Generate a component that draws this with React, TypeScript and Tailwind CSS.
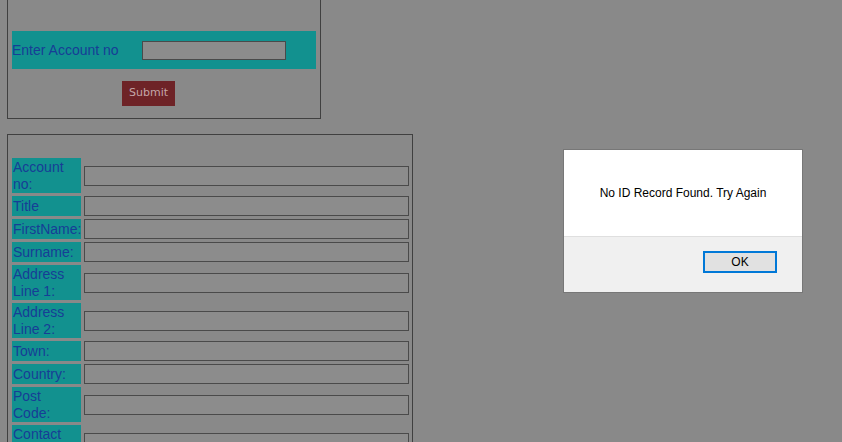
import React from 'react';

const fields = [
  'Account no:',
  'Title',
  'FirstName:',
  'Surname:',
  'Address Line 1:',
  'Address Line 2:',
  'Town:',
  'Country:',
  'Post Code:',
  'Contact Number:',
];

const App: React.FC = () => {
  return (
    <div className="relative w-[842px] h-[442px] overflow-hidden bg-[#898989] pl-[7px] font-['Liberation_Sans',Arial,sans-serif]">
      {/* Search box */}
      <div className="-mt-[10px] w-[314px] h-[129px] border border-[#404040] px-[4px] pt-[40px]">
        <div className="flex items-center w-[304px] h-[38px] bg-[#12918f]">
          <span className="w-[130px] text-[14px] text-[#173d96]">Enter Account no</span>
          <div className="w-[144px] h-[19px] border border-[#4a4a4a] bg-[#8c8c8c]" />
        </div>
        <button className="mt-[12px] ml-[110px] w-[53px] h-[25px] bg-[#6e2327] text-[11px] text-[#c4a6a7] font-['DejaVu_Sans',Verdana,sans-serif]">
          Submit
        </button>
      </div>

      {/* Details form */}
      <div className="mt-[15px] w-[406px] h-[320px] border border-[#404040] pl-[4px] pr-[3px] pt-[23px]">
        <div className="flex flex-col gap-[3px]">
          {fields.map((f) => (
            <div key={f} className="flex items-stretch gap-[3px]">
              <div className="flex items-center w-[69px] shrink-0 bg-[#12918f] pl-[1px] py-[1px] text-[14px] leading-[16.5px] text-[#173d96]">
                {f}
              </div>
              <div className="flex flex-1 items-center">
                <div className="w-full h-[20px] border border-[#4a4a4a] bg-[#8c8c8c]" />
              </div>
            </div>
          ))}
        </div>
      </div>

      {/* Alert dialog */}
      <div className="absolute left-[563px] top-[149px] w-[240px] h-[144px] border border-[#777777] bg-white flex flex-col">
        <div className="flex h-[86px] items-center justify-center text-[12px] text-black">
          No ID Record Found. Try Again
        </div>
        <div className="flex flex-1 justify-end items-start border-t border-[#dfdfdf] bg-[#f0f0f0] pt-[14px] pr-[25px]">
          <button className="w-[74px] h-[22px] border-2 border-[#0078d7] bg-[#e1e1e1] text-[12px] text-black">
            OK
          </button>
        </div>
      </div>
    </div>
  );
};

export default App;
